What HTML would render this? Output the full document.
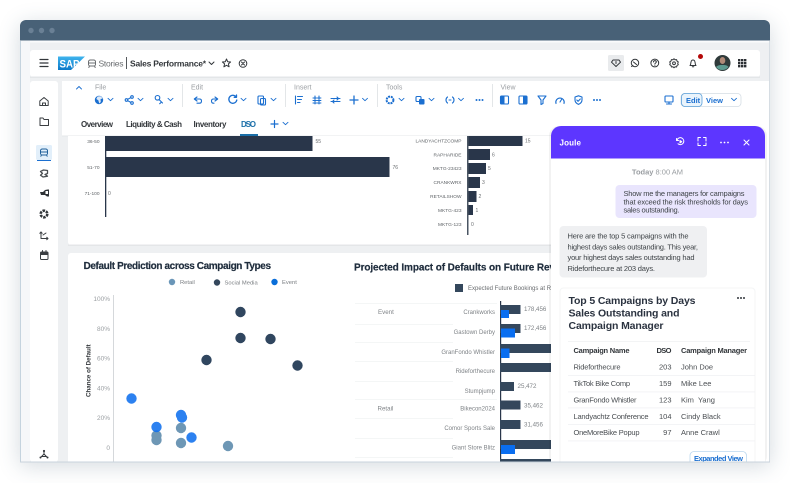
<!DOCTYPE html>
<html><head><meta charset="utf-8">
<style>
html,body{margin:0;padding:0;background:#fff;width:790px;height:483px;overflow:hidden}
#win{position:absolute;left:20px;top:20px;width:750px;height:442px;border-radius:6px 6px 0 0;box-shadow:0 4px 22px rgba(60,85,110,.22)}
svg{position:absolute;left:0;top:0;filter:blur(.3px)}
text{font-family:"Liberation Sans",sans-serif}
.b{font-weight:700}
.lab{font-size:4.8px;fill:#5f6367;text-anchor:end}
.val{font-size:5px;fill:#6a6d70}
.ax{font-size:6.500px;fill:#9a9ea2;text-anchor:end}
.cat{font-size:6px;fill:#7f8387;text-anchor:end}
.num{font-size:6.200px;fill:#7f8387}
.grp{font-size:7px;fill:#9a9ea2}
.tab{font-size:8px;font-weight:700;fill:#32363a}
.ic{fill:none;stroke:#1b6fd0;stroke-width:1.1;stroke-linecap:round;stroke-linejoin:round}
.sk{fill:none;stroke:#32363a;stroke-width:1;stroke-linecap:round;stroke-linejoin:round}
.wh{fill:none;stroke:#fff;stroke-width:1;stroke-linecap:round;stroke-linejoin:round}
.ch{fill:none;stroke:#1b6fd0;stroke-width:.9;stroke-linecap:round;stroke-linejoin:round}
.cell{font-size:7.5px;fill:#4a4e52}
.th{font-size:7.5px;font-weight:700;fill:#32363a}
.msg{font-size:7.5px;fill:#3f4448}
.leg{font-size:5.800px;fill:#7a7e82}
.ttl{stroke:#1f2d3d;stroke-width:.2}
</style></head>
<body>
<div id="win"></div>
<svg width="790" height="483" viewBox="0 0 790 483" xmlns="http://www.w3.org/2000/svg">
<defs>
<clipPath id="w"><path d="M20 26a6 6 0 0 1 6-6h738a6 6 0 0 1 6 6v436H20z"/></clipPath>
<clipPath id="lc"><rect x="58" y="136" width="493" height="326"/></clipPath>
<clipPath id="jc"><path d="M551 136a10 10 0 0 1 10-10h194a10 10 0 0 1 10 10v326H551z"/></clipPath>
<clipPath id="sapc"><path d="M58 56.500h27L71 70H58z"/></clipPath>
<linearGradient id="sap" x1="0" y1="0" x2="0" y2="1"><stop offset="0" stop-color="#3fb4ee"/><stop offset="1" stop-color="#0a78c8"/></linearGradient>
<g id="cv"><path class="ch" d="M-2.5-1.2 0 1.2 2.5-1.2"/></g>
</defs>
<g clip-path="url(#w)">
<rect x="20" y="20" width="750" height="442" fill="#eef0f2"/>
<rect x="20" y="20" width="750" height="21" fill="#486177"/>
<rect x="20" y="40.500" width="750" height="2" fill="#fafbfc"/>
<rect x="20" y="41" width="10" height="421" fill="#f6f7f9"/>
<rect x="20" y="41" width="1" height="421" fill="#c5d3de"/>
<rect x="769" y="41" width="1" height="421" fill="#d6dde3"/>
<circle cx="31" cy="30.500" r="2.700" fill="#6a8095"/><circle cx="41.500" cy="30.500" r="2.700" fill="#6a8095"/><circle cx="52" cy="30.500" r="2.700" fill="#6a8095"/>

<!-- shell bar -->
<rect x="30" y="50" width="730" height="27" rx="3" fill="#fff"/>
<rect x="30" y="76.500" width="730" height="1.500" fill="#e3e6e8"/>
<path class="sk" d="M40 59.500h8M40 63h8M40 66.500h8" style="stroke-width:1.200"/>
<path d="M58 56.500h27L71 70H58z" fill="url(#sap)"/>
<g clip-path="url(#sapc)"><text x="59.500" y="67.500" class="b" style="font-size:11px;fill:#fff" textLength="20" lengthAdjust="spacingAndGlyphs">SAP</text></g>
<g class="sk" style="stroke:#6a6d70"><rect x="88.500" y="60" width="7" height="6" rx="1.800"/><path d="M88.500 63h7M89.500 66l-.7 1.500M94.500 66l.7 1.500"/></g>
<text x="98.500" y="66.500" style="font-size:8.500px;fill:#6a6d70" textLength="25">Stories</text>
<rect x="126" y="57" width="1" height="12" fill="#55595d"/>
<text x="130" y="66.500" class="b" style="font-size:8.500px;fill:#32363a" textLength="76">Sales Performance*</text>
<path class="sk" d="M209 62l2.500 2.500 2.500-2.500"/>
<path class="sk" d="M226.500 59l1.200 2.700 2.900.3-2.200 1.900.7 2.900-2.600-1.500-2.600 1.500.7-2.900-2.200-1.900 2.900-.3z"/>
<circle class="sk" cx="243" cy="63.500" r="3.800"/><path class="sk" d="M241.500 62l3 3M244.500 62l-3 3"/>
<rect x="608" y="55" width="16" height="16" rx="1.500" fill="#e9ebed"/>
<path class="sk" d="M613 60h6l1.500 2.200-4.500 4.300-4.500-4.300zM616 61.500v2"/>
<circle class="sk" cx="635" cy="63" r="3.700"/><path class="sk" d="M631.500 66.500l1.500-1M633.500 62l3 2.500"/>
<circle class="sk" cx="654.800" cy="63" r="3.900"/><path class="sk" d="M653.500 62c0-1.800 2.800-1.800 2.800 0 0 1-1.400 1-1.400 2M654.900 65.300v.1"/>
<path class="sk" d="M674 58.800l1.100 1 1.500-.2.400 1.500 1.300.8-.6 1.400.6 1.400-1.300.8-.4 1.500-1.500-.2-1.100 1-1.100-1-1.500.2-.4-1.500-1.300-.8.6-1.400-.6-1.400 1.300-.8.4-1.500 1.500.2z"/><circle class="sk" cx="674" cy="63.300" r="1.400"/>
<path class="sk" d="M690 65.500c1-1 .6-2 1-3.500.3-1.400 1.200-2 2-2s1.700.6 2 2c.4 1.500 0 2.500 1 3.500zM692.300 66.700h1.500"/>
<circle cx="700.500" cy="56.500" r="2.500" fill="#b40808"/>
<circle cx="722.500" cy="63" r="8" fill="#2f3a3a"/>
<path d="M716 67c2-2 4-2 6.500-2s4.500 0 6 2a8 8 0 0 1-12.500 0z" fill="#5d9a90"/>
<ellipse cx="722.500" cy="60.500" rx="2.800" ry="3.500" fill="#b08a78"/>
<path d="M738 59h2.400v2.400H738zM741 59h2.400v2.400H741zM744 59h2.400v2.400H744zM738 62h2.400v2.400H738zM741 62h2.400v2.400H741zM744 62h2.400v2.400H744zM738 65h2.400v2.400H738zM741 65h2.400v2.400H741zM744 65h2.400v2.400H744z" fill="#2b2f33"/>

<!-- sidebar -->
<rect x="30" y="81" width="28" height="381" rx="3" fill="#fff"/>
<g class="sk" style="stroke:#3a3e42"><path d="M39.800 101l4.200-3.500 4.200 3.500v4.500h-8.400zM42.500 105.500v-2.500h3v2.500"/>
<path d="M40 118h3l1 1.500h4.500v6H40z"/></g>
<rect x="36" y="145" width="16" height="15" rx="1.500" fill="#e2effa"/>
<rect x="37" y="160" width="14" height="1" fill="#1b6fd0"/>
<rect class="sk" style="stroke:#1f5f9a" x="40.500" y="149" width="7" height="6" rx="1.800"/><path class="sk" style="stroke:#1f5f9a" d="M40.500 152h7M41.500 155l-.7 1.200M46.500 155l.7 1.200"/>
<path class="sk" style="stroke:#4a4e52;stroke-width:1.300" d="M40.500 171.500l3-1.500 4 .5v3l-2.500 1 2.500 1.700-4.500.8-2.500-1.800 2-1.800z"/>
<path d="M40 192h3l2-2 2.500-.5h1.500v7h-2l-2-1.500H41z" fill="#2f3337"/><rect x="45.500" y="191" width="2.500" height="3" fill="#fff"/>
<circle cx="44" cy="214" r="3.300" fill="none" stroke="#33373b" stroke-width="2.600" stroke-dasharray="2.500 1"/>
<path class="sk" style="stroke:#3a3e42" d="M41 232v6.500h7M41 232l-1.200 1.300M41 232l1.200 1.300M48 238.500l-1.300-1.200M48 238.500l-1.300 1.200M43 235l3-2"/>
<rect class="sk" style="stroke:#3a3e42" x="40.500" y="252" width="7.500" height="7.500" rx="1"/><rect x="40.500" y="252" width="7.500" height="3" fill="#3a3e42"/><path class="sk" style="stroke:#3a3e42" d="M42.500 250.500v1.500M46 250.500v1.500"/>
<path class="sk" style="stroke:#33373b" d="M44 451v3l-3.200 3.300M44 454l3.200 3.300M41.500 456.500h5"/><circle cx="44" cy="451" r="1.100" fill="#33373b"/><circle cx="40.500" cy="457.500" r="1" fill="#33373b"/><circle cx="47.500" cy="457.500" r="1" fill="#33373b"/>

<!-- toolbar -->
<rect x="62" y="81" width="707" height="55" fill="#fff"/>
<rect x="62" y="135.500" width="490" height="1" fill="#e4e7e9"/>
<path class="ch" d="M76.500 89l2.500-2.500 2.500 2.500"/>
<text x="95" y="89.500" class="grp">File</text><text x="191" y="89.500" class="grp">Edit</text><text x="294" y="89.500" class="grp">Insert</text><text x="386" y="89.500" class="grp">Tools</text><text x="500.500" y="89.500" class="grp">View</text>
<g fill="#e3e6e8"><rect x="182" y="84" width="1" height="23"/><rect x="285" y="84" width="1" height="23"/><rect x="377" y="84" width="1" height="23"/><rect x="492" y="84" width="1" height="23"/></g>
<circle cx="99" cy="100" r="4.200" fill="#1b6fd0"/><path d="M97.500 96.500l3-.3 2.300 2-2.300 1 .3 2.800-1.500 1.500-1-3.300-2-1.200z" fill="#fff" opacity=".85"/>
<use href="#cv" x="110.500" y="99.500"/>
<g class="ic"><circle cx="126.500" cy="100" r="1.300"/><circle cx="132" cy="97" r="1.300"/><circle cx="132" cy="103" r="1.300"/><path d="M127.700 99.300l3.100-1.700M127.700 100.700l3.100 1.700"/></g>
<use href="#cv" x="140.500" y="99.500"/>
<g class="ic"><circle cx="157.500" cy="97.800" r="2.300"/><path d="M159 99.500l3.500 3.500M161 102.500l-1.300 1.200"/></g>
<use href="#cv" x="170.500" y="99.500"/>
<path class="ic" d="M197 97l-2.700 2 2.700 2M194.500 99h5c1.300 0 2 .8 2 2s-.7 2.200-2 2.200h-2.500"/>
<path class="ic" d="M215 97l2.700 2-2.700 2M217.500 99h-4c-1.300 0-2 .8-2 2s.7 2.200 2 2.200h.5"/>
<path class="ic" style="stroke-width:1.300" d="M236 96.800a4 4 0 1 0 .8 3.200M236.500 95v2.300h-2.300"/>
<use href="#cv" x="243.500" y="99.500"/>
<rect class="ic" x="258" y="96" width="5.500" height="8" rx="1"/><rect class="ic" x="260.500" y="98.500" width="5" height="6.500" rx="1" fill="#1b6fd0"/>
<use href="#cv" x="273.500" y="99.500"/>
<path class="ic" d="M295.500 96v8M297.500 96.500h5M297.500 99.500h4M297.500 102.500h2.500"/>
<path class="ic" stroke-dasharray="1.300 .9" d="M313 98h8M313 100.500h8M313 103h8M315 96v8M319 96v8"/>
<path class="ic" d="M331 98.500h9M331 101.500h9M337 97l1.500 1.500-1.500 1.500M334 100l-1.500 1.500 1.500 1.500"/>
<path class="ic" style="stroke-width:1.300" d="M354 96v8M350 100h8"/>
<use href="#cv" x="365" y="99.500"/>
<circle cx="390" cy="100" r="3.400" fill="none" stroke="#1b6fd0" stroke-width="2" stroke-dasharray="2 .8"/>
<use href="#cv" x="401.500" y="99.500"/>
<rect class="ic" x="416" y="96.500" width="5" height="5" rx="1"/><rect x="419" y="99" width="5.500" height="5.500" rx="1" fill="#1b6fd0"/>
<use href="#cv" x="431.500" y="99.500"/>
<path class="ic" d="M447.500 97c-2 1.500-2 4.500 0 6M452.500 97c2 1.500 2 4.500 0 6M449 100h2"/>
<use href="#cv" x="461" y="99.500"/>
<g fill="#1b6fd0"><circle cx="476.500" cy="100" r="1"/><circle cx="479.500" cy="100" r="1"/><circle cx="482.500" cy="100" r="1"/></g>
<rect class="ic" x="500.500" y="96" width="8" height="8" rx="1"/><rect x="500.500" y="96" width="4" height="8" fill="#1b6fd0"/>
<rect class="ic" x="519" y="96" width="8" height="8" rx="1"/><rect x="523" y="96" width="4" height="8" fill="#1b6fd0"/>
<path class="ic" d="M538 96h8l-3 4v3.500l-2 1V100z"/>
<path class="ic" d="M556 103.500a4.200 4.200 0 1 1 8 0M560 102l1.500-2.500"/>
<path class="ic" d="M578.500 95.800l3.500 1.200v3c0 2.200-1.500 3.500-3.500 4.400-2-.9-3.500-2.200-3.500-4.400v-3zM576.800 100l1.300 1.300 2.200-2.300"/>
<g fill="#1b6fd0"><circle cx="594" cy="100" r="1"/><circle cx="597" cy="100" r="1"/><circle cx="600" cy="100" r="1"/></g>
<rect class="ic" x="665" y="96" width="8" height="6" rx=".7"/><path class="ic" d="M669 102v2M666.500 104h5"/>
<rect x="681" y="93.500" width="60" height="13" rx="3.500" fill="#fff" stroke="#d5dde4" stroke-width=".8"/>
<rect x="681.500" y="93.500" width="20.500" height="13" rx="3.500" fill="#eaf4fc" stroke="#5a9ed8" stroke-width=".8"/>
<text x="686" y="103" class="b" style="font-size:7.500px;fill:#1b6fd0">Edit</text>
<text x="706" y="103" class="b" style="font-size:7.500px;fill:#1b6fd0">View</text>
<use href="#cv" x="734" y="99.500"/>
<text x="81" y="127" class="tab" textLength="32">Overview</text>
<text x="126" y="127" class="tab" textLength="56">Liquidity &amp; Cash</text>
<text x="193.500" y="127" class="tab" textLength="33">Inventory</text>
<text x="241" y="127" class="tab" style="fill:#1b6fa8" textLength="15">DSO</text>
<rect x="240" y="134" width="18" height="2" fill="#1b6fa8"/>
<path class="ic" style="stroke-width:1.200" d="M274.500 120.500v7M271 124h7"/>
<use href="#cv" x="285.500" y="123.500"/>

<!-- panels -->
<g clip-path="url(#lc)">
<path d="M68 130h700v112a3 3 0 0 1-3 3H71a3 3 0 0 1-3-3z" fill="#fff"/>
<rect x="68" y="244.500" width="484" height="1.500" fill="#e4e6e8"/>
<rect x="68" y="253" width="490" height="215" rx="3" fill="#fff"/>

<!-- left bar chart -->
<text x="99.500" y="143" class="lab">36-50</text><text x="99.500" y="169" class="lab">51-70</text><text x="99.500" y="195" class="lab">71-100</text>
<rect x="105" y="135" width="207.500" height="16" fill="#29364a"/>
<rect x="105" y="157" width="284.500" height="20" fill="#29364a"/>
<rect x="105" y="135" width="1.300" height="82" fill="#29364a"/>
<text x="315.500" y="143" class="val">55</text><text x="392.500" y="169" class="val">76</text><text x="108" y="195" class="val">0</text>

<!-- right bar chart -->
<text x="461.500" y="142.500" class="lab">LANDYACHTZCOMP</text><text x="461.500" y="156.300" class="lab">RAPHARIDE</text><text x="461.500" y="170" class="lab">MKTG-23423</text><text x="461.500" y="184" class="lab">CRANKWRX</text><text x="461.500" y="197.800" class="lab">RETAILSHOW</text><text x="461.500" y="211.800" class="lab">MKTG-423</text><text x="461.500" y="225.800" class="lab">MKTG-123</text>
<g fill="#29364a"><rect x="467" y="135" width="55.500" height="11"/><rect x="467" y="149" width="23" height="11"/><rect x="467" y="163" width="19" height="11"/><rect x="467" y="177" width="13" height="11"/><rect x="467" y="191" width="9.500" height="11"/><rect x="467" y="205" width="6" height="10"/><rect x="467" y="135" width="1.500" height="100" fill="#4a5563"/></g>
<text x="525" y="142.500" class="val">15</text><text x="492" y="156.300" class="val">6</text><text x="488" y="170" class="val">5</text><text x="482" y="184" class="val">3</text><text x="478.500" y="197.800" class="val">2</text><text x="475.500" y="211.800" class="val">1</text><text x="471" y="225.800" class="val">0</text>

<!-- scatter -->
<text x="83.500" y="269" class="b ttl" style="font-size:10px;fill:#1f2d3d" textLength="187.500">Default Prediction across Campaign Types</text>
<circle cx="172" cy="282" r="3.200" fill="#6a96b8"/><text x="180" y="284" class="leg">Retail</text>
<circle cx="217" cy="282.500" r="3.200" fill="#34475c"/><text x="224.500" y="284.500" class="leg">Social Media</text>
<circle cx="274.500" cy="282" r="3.200" fill="#0a6ed9"/><text x="282" y="284" class="leg">Event</text>
<rect x="113" y="295" width="1" height="170" fill="#d5d8db"/>
<text x="110" y="301" class="ax">100%</text><text x="110" y="331" class="ax">80%</text><text x="110" y="360.500" class="ax">60%</text><text x="110" y="390.500" class="ax">40%</text><text x="110" y="420" class="ax">20%</text><text x="110" y="450" class="ax">0</text>
<text transform="translate(90.500 397) rotate(-90)" class="b" style="font-size:6.200px;fill:#32363a">Chance of Default</text>
<g fill="#2c435c" opacity=".98"><circle cx="240.500" cy="312" r="5.200"/><circle cx="240.500" cy="338" r="5.200"/><circle cx="270.500" cy="339" r="5.200"/><circle cx="206.500" cy="360" r="5.200"/><circle cx="297.500" cy="365.500" r="5.200"/></g>
<g fill="#5f8cae" opacity=".9"><circle cx="156.500" cy="435.500" r="5.200"/><circle cx="156.500" cy="440" r="5.200"/><circle cx="181" cy="428" r="5.200"/><circle cx="181" cy="443" r="5.200"/><circle cx="228" cy="446" r="5.200"/></g>
<g fill="#0f70ee" opacity=".88"><circle cx="131.500" cy="398.500" r="5.200"/><circle cx="181" cy="415" r="5.200"/><circle cx="182" cy="417.500" r="5.200"/><circle cx="156.500" cy="427" r="5.200"/><circle cx="191.500" cy="437.500" r="5.200"/></g>

<!-- projected chart -->
<text x="354" y="270.500" class="b ttl" style="font-size:10px;fill:#1f2d3d" textLength="224">Projected Impact of Defaults on Future Revenue</text>
<rect x="455" y="284" width="8" height="8" fill="#34475c"/>
<text x="468" y="290" style="font-size:6px;fill:#6a6d70">Expected Future Bookings at Risk</text>
<g fill="#f1f3f4"><rect x="355" y="303" width="142" height=".8"/><rect x="355" y="324" width="98" height=".8"/><rect x="355" y="342" width="98" height=".8"/><rect x="355" y="361" width="98" height=".8"/><rect x="355" y="381" width="98" height=".8"/><rect x="355" y="399" width="142" height=".8"/><rect x="355" y="418" width="98" height=".8"/><rect x="355" y="438" width="98" height=".8"/><rect x="355" y="457" width="98" height=".8"/></g>
<text x="378" y="314" class="num">Event</text><text x="377.500" y="410.500" class="num">Retail</text>
<text x="495" y="314" class="cat">Crankworks</text><text x="495" y="334" class="cat">Gastown Derby</text><text x="495" y="354" class="cat">GranFondo Whistler</text><text x="495" y="373" class="cat">Rideforthecure</text><text x="495" y="393" class="cat">Stumpjump</text><text x="495" y="410.500" class="cat">Bikecon2024</text><text x="495" y="430" class="cat">Comor Sports Sale</text><text x="495" y="449.500" class="cat">Giant Store Blitz</text>
<rect x="500" y="301" width="1.200" height="165" fill="#29364a"/>
<g fill="#34475c"><rect x="500" y="305" width="20.500" height="9"/><rect x="500" y="324" width="20.500" height="9"/><rect x="500" y="344" width="60" height="9"/><rect x="500" y="363" width="60" height="9"/><rect x="500" y="382" width="14" height="9"/><rect x="500" y="400.500" width="20.500" height="9"/><rect x="500" y="420" width="20.500" height="9"/><rect x="500" y="440" width="60" height="9"/><rect x="500" y="459" width="60" height="6"/></g>
<g fill="#0a6ef0"><rect x="501" y="310" width="8" height="8"/><rect x="501" y="328.500" width="14" height="9"/><rect x="501" y="348.500" width="8.500" height="9.500"/><rect x="501" y="445" width="14" height="9"/></g>
<text x="524" y="311" class="num">178,456</text><text x="524" y="330" class="num">172,456</text><text x="517.500" y="388" class="num">25,472</text><text x="524" y="407.500" class="num">35,462</text><text x="524" y="426.500" class="num">31,456</text>
</g>

<rect x="765" y="136" width="4" height="326" fill="#fff"/>

<!-- Joule -->
<rect x="549" y="126" width="218" height="340" rx="10" fill="#000" opacity=".05"/>
<g clip-path="url(#jc)">
<rect x="551" y="126" width="214" height="340" fill="#fff"/>
<rect x="551" y="126" width="214" height="32.500" fill="#5d36ff"/>
<text x="559.500" y="145.500" class="b" style="font-size:8px;fill:#fff" textLength="21.500">Joule</text>
<g class="wh"><path d="M677 140a3.500 3.500 0 1 1 1 3.800M676.500 138.500v2h2"/><path d="M680 140.500l1.800 1.200-1.800 1.200z" fill="#fff"/>
<path d="M698 142v-3.500h2.500M706 142v-3.500h-2.500M698 144v2.500h2.500M706 144v2.500h-2.500" transform="translate(0 -1)"/>
<path d="M744.500 140l5 5M749.500 140l-5 5" transform="translate(-.5 0)"/></g>
<g fill="#fff"><circle cx="721" cy="142.500" r=".9"/><circle cx="724.500" cy="142.500" r=".9"/><circle cx="728" cy="142.500" r=".9"/></g>
<text x="657.500" y="174.500" style="font-size:7.500px;fill:#9a9ea2" text-anchor="middle"><tspan class="b">Today</tspan> 8:00 AM</text>
<rect x="615.500" y="185" width="141" height="33" rx="4" fill="#e9e5fd"/>
<text x="623.500" y="196" class="msg" textLength="121">Show me the managers for campaigns</text>
<text x="623.500" y="204.500" class="msg" textLength="124.500">that exceed the risk thresholds for days</text>
<text x="623.500" y="212.500" class="msg" textLength="56">sales outstanding.</text>
<rect x="559.500" y="226" width="147.500" height="51.500" rx="4" fill="#eff0f2"/>
<text x="567.500" y="238.500" class="msg" textLength="121">Here are the top 5 campaigns with the</text>
<text x="567.500" y="249.500" class="msg" textLength="130.500">highest days sales outstanding. This year,</text>
<text x="567.500" y="260" class="msg" textLength="127">your highest days sales outstanding had</text>
<text x="567.500" y="271" class="msg" textLength="87.500">Rideforthecure at 203 days.</text>
<rect x="560" y="288" width="195" height="185" rx="3.500" fill="#fff" stroke="#f4f5f6" stroke-width="1"/>
<text x="568.500" y="304" class="b" style="font-size:10.500px;fill:#2b3340" textLength="127">Top 5 Campaigns by Days</text>
<text x="568.500" y="316.500" class="b" style="font-size:10.500px;fill:#2b3340" textLength="111">Sales Outstanding and</text>
<text x="568.500" y="329" class="b" style="font-size:10.500px;fill:#2b3340" textLength="95">Campaign Manager</text>
<g fill="#32363a"><circle cx="738" cy="298" r="1"/><circle cx="741" cy="298" r="1"/><circle cx="744" cy="298" r="1"/></g>
<rect x="568" y="341" width="182" height="1" fill="#f3f4f5"/>
<text x="573.500" y="353" class="th" textLength="56">Campaign Name</text><text x="656.500" y="353" class="th" textLength="15">DSO</text><text x="681" y="353" class="th" textLength="66">Campaign Manager</text>
<g fill="#f0f1f3"><rect x="568" y="375" width="187" height=".8"/><rect x="568" y="391.500" width="187" height=".8"/><rect x="568" y="407.500" width="187" height=".8"/><rect x="568" y="424" width="187" height=".8"/><rect x="568" y="440.500" width="187" height=".8"/></g>
<text x="573.500" y="369.500" class="cell" textLength="47">Rideforthecure</text><text x="671.500" y="369.500" class="cell" text-anchor="end">203</text><text x="681" y="369.500" class="cell">John Doe</text>
<text x="573.500" y="386" class="cell" textLength="56.500">TikTok Bike Comp</text><text x="671.500" y="386" class="cell" text-anchor="end">159</text><text x="681" y="386" class="cell">Mike Lee</text>
<text x="573.500" y="402.500" class="cell" textLength="63">GranFondo Whistler</text><text x="671.500" y="402.500" class="cell" text-anchor="end">123</text><text x="681" y="402.500" class="cell" xml:space="preserve">Kim  Yang</text>
<text x="573.500" y="419" class="cell" textLength="75">Landyachtz Conference</text><text x="671.500" y="419" class="cell" text-anchor="end">104</text><text x="681" y="419" class="cell">Cindy Black</text>
<text x="573.500" y="435" class="cell" textLength="66">OneMoreBike Popup</text><text x="671.500" y="435" class="cell" text-anchor="end">97</text><text x="681" y="435" class="cell">Anne Crawl</text>
<rect x="690" y="451.500" width="56.500" height="16" rx="4" fill="#fff" stroke="#bcd8ef" stroke-width=".8"/>
<text x="694" y="461" class="b" style="font-size:7.500px;fill:#1b6fd0" textLength="49">Expanded View</text>
</g>
</g>
<rect x="20" y="461.500" width="750" height="1" fill="#c9d3dc"/>
</svg>
</body></html>
